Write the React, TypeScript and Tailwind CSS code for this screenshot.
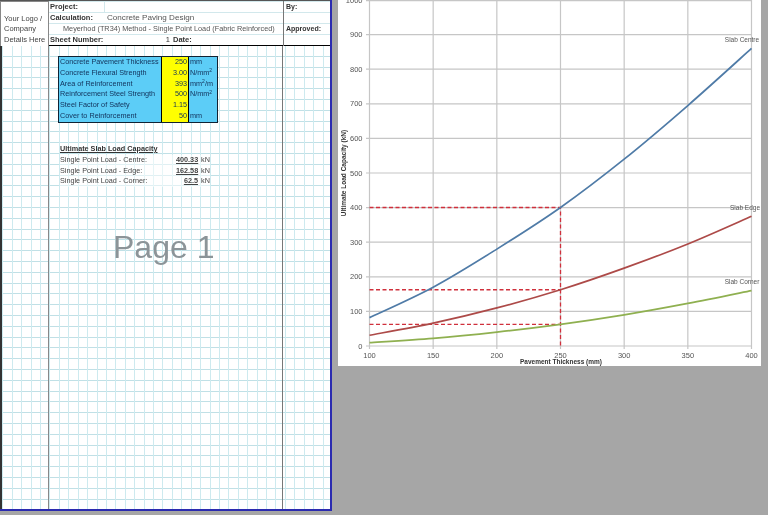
const font = "font-['Liberation_Sans',Arial,sans-serif]";

const inputs: [string, string, React.ReactNode][] = [
  ["Concrete Pavement Thickness", "250", "mm"],
  ["Concrete Flexural Strength", "3.00", <>N/mm<sup className="text-[5px] leading-none">2</sup></>],
  ["Area of Reinforcement", "393", <>mm<sup className="text-[5px] leading-none">2</sup>/m</>],
  ["Reinforcement Steel Strength", "500", <>N/mm<sup className="text-[5px] leading-none">2</sup></>],
  ["Steel Factor of Safety", "1.15", ""],
  ["Cover to Reinforcement", "50", "mm"],
];

const results = [
  ["Single Point Load - Centre:", "400.33"],
  ["Single Point Load - Edge:", "162.58"],
  ["Single Point Load - Corner:", "62.5"],
];

const X = (v: number) => 369.5 + ((v - 100) / 300) * 382;
const Y = (v: number) => 346 - v * 0.346;
const xs = [100, 150, 200, 250, 300, 350, 400];

function curve(vals: number[]) {
  const p = vals.map((v, i) => [X(xs[i]), Y(v)]);
  let d = `M${p[0][0]} ${p[0][1]}`;
  for (let i = 0; i < p.length - 1; i++) {
    const p0 = p[Math.max(0, i - 1)], p1 = p[i], p2 = p[i + 1], p3 = p[Math.min(p.length - 1, i + 2)];
    d += ` C${p1[0] + (p2[0] - p0[0]) / 6} ${p1[1] + (p2[1] - p0[1]) / 6} ${p2[0] - (p3[0] - p1[0]) / 6} ${p2[1] - (p3[1] - p1[1]) / 6} ${p2[0]} ${p2[1]}`;
  }
  return d;
}

function Chart() {
  const ys = [0, 100, 200, 300, 400, 500, 600, 700, 800, 900, 1000];
  return (
    <svg width="423" height="366" viewBox="338 0 423 366" className="block">
      {ys.map((v) => (
        <g key={v}>
          <line x1={366} x2={751.5} y1={Math.max(Y(v), 0.6)} y2={Math.max(Y(v), 0.6)} stroke="#c6c6c6" strokeWidth="1.2" />
          <text x={362.5} y={Y(v) + 2.6} textAnchor="end" fontSize="7.5" fill="#555">{v}</text>
        </g>
      ))}
      {xs.map((v) => (
        <g key={v}>
          <line x1={X(v)} x2={X(v)} y1={0} y2={349} stroke="#c6c6c6" strokeWidth="1.2" />
          <text x={X(v)} y={358} textAnchor="middle" fontSize="7.5" fill="#555">{v}</text>
        </g>
      ))}
      <path d={`M369.5 ${Y(400.33)} H${X(250)} V346`} fill="none" stroke="#d0303c" strokeWidth="1.3" strokeDasharray="4 2.5" />
      <path d={`M369.5 ${Y(162.58)} H${X(250)}`} fill="none" stroke="#d0303c" strokeWidth="1.3" strokeDasharray="4 2.5" />
      <path d={`M369.5 ${Y(62.5)} H${X(250)}`} fill="none" stroke="#d0303c" strokeWidth="1.3" strokeDasharray="4 2.5" />
      <path d={curve([82, 170, 280, 400.33, 540, 695, 860])} fill="none" stroke="#4f7ba7" strokeWidth="1.7" />
      <path d={curve([31, 66, 110, 162.58, 225, 295, 375])} fill="none" stroke="#ad4a48" strokeWidth="1.7" />
      <path d={curve([10, 22, 40, 62.5, 90, 123, 160])} fill="none" stroke="#8fb050" strokeWidth="1.7" />
      <text x={742} y={42} textAnchor="middle" fontSize="6.5" fill="#555">Slab Centre</text>
      <text x={745} y={210} textAnchor="middle" fontSize="6.5" fill="#555">Slab Edge</text>
      <text x={742} y={284} textAnchor="middle" fontSize="6.5" fill="#555">Slab Corner</text>
      <text x={561} y={363.5} textAnchor="middle" fontSize="6.5" fontWeight="bold" fill="#333">Pavement Thickness  (mm)</text>
      <text transform="translate(345.5 173) rotate(-90)" textAnchor="middle" fontSize="6.5" fontWeight="bold" fill="#333">Ultimate Load Capacity (kN)</text>
    </svg>
  );
}

export default function App() {
  return (
    <div className={`${font} flex h-[515px] w-[768px] items-start overflow-hidden whitespace-nowrap bg-[#a6a6a6] text-[7.25px] leading-[10.8px] text-[#444] blur-[0.35px]`}>
      <div className="flex h-[511px] w-[332px] shrink-0 flex-col border-r-2 border-b-2 border-[#2b2bb0] bg-white">
        <header className="grid h-[46px] shrink-0 grid-cols-[49px_1fr_47px] border-t border-b border-t-[#555] border-b-black bg-[linear-gradient(#d2e8ec_1px,transparent_1px)] bg-[size:100%_11px] bg-[position:0_0]">
          <div className="flex flex-col justify-end border-x border-t border-[#888] bg-white pb-[1px] pl-[3px] text-[7.5px] leading-[10.3px]">
            <span>Your Logo /</span>
            <span>Company</span>
            <span>Details Here</span>
          </div>
          <div className="flex flex-col pt-px font-bold text-[7.5px] text-[#333]">
            <div className="h-[11px] w-[56px] border-r border-r-[#d2e8ec] pl-[1px]">Project:</div>
            <div className="flex h-[11px]">
              <span className="w-[58px] pl-[1px]">Calculation:</span>
              <span className="text-[8.1px] font-normal text-[#555]">Concrete Paving Design</span>
            </div>
            <div className="h-[11px] pl-[14px] font-normal text-[#555] text-[7.3px]">Meyerhod (TR34) Method - Single Point Load (Fabric Reinforced)</div>
            <div className="flex h-[11px]">
              <span className="w-[100px] pl-[1px]">Sheet Number:</span>
              <span className="w-[21px] text-right font-normal">1</span>
              <span className="pl-[3px]">Date:</span>
            </div>
          </div>
          <div className="flex flex-col border-l border-l-[#777] pt-px pl-[2px] font-bold text-[7px] text-[#333]">
            <div className="h-[22px]">By:</div>
            <div className="h-[11px]">Approved:</div>
          </div>
        </header>
        <main className="relative grid min-h-0 flex-1 grid-cols-[49px_1fr_47px] bg-[repeating-linear-gradient(90deg,transparent_0,transparent_2.3px,#cdeaef_2.3px,#cdeaef_3.3px,transparent_3.3px,transparent_9.42px),repeating-linear-gradient(180deg,transparent_0,transparent_9.8px,#c0e0e6_9.8px,#c0e0e6_10.8px)]">
          <div className="border-r border-l-2 border-l-[#333] border-r-[#888]" />
          <div className="border-r border-r-[#777] pl-[9px] pt-[10px]">
            <div className="grid w-[160px] grid-cols-[102px_28px_1fr] border border-[#123] bg-[#5ccdf7] text-[#12315a]">
              {inputs.map(([label, value, unit]) => (
                <div key={label} className="col-span-3 grid h-[10.8px] grid-cols-subgrid">
                  <span className="pl-[1px]">{label}</span>
                  <span className="border-x border-x-black bg-[#ffff00] pr-[1px] text-right">{value}</span>
                  <span className="pl-[1px]">{unit}</span>
                </div>
              ))}
            </div>
            <div className="mt-[21px] pl-[2px]">
              <div className="h-[11px] font-bold text-[#333] underline">Ultimate Slab Load Capacity</div>
              {results.map(([label, value]) => (
                <div key={label} className="flex h-[10.8px] w-[150px] bg-white/50">
                  <span className="w-[116px]">{label}</span>
                  <span className="w-[22px] text-right font-bold underline">{value}</span>
                  <span className="pl-[3px]">kN</span>
                </div>
              ))}
            </div>
          </div>
          <div />
          <div className="absolute left-[113px] top-[181px] text-[32px] leading-[40px] text-[#8c9498]">Page 1</div>
        </main>
      </div>
      <div className="ml-[6px] h-[366px] w-[423px] shrink-0 bg-white">
        <Chart />
      </div>
    </div>
  );
}
